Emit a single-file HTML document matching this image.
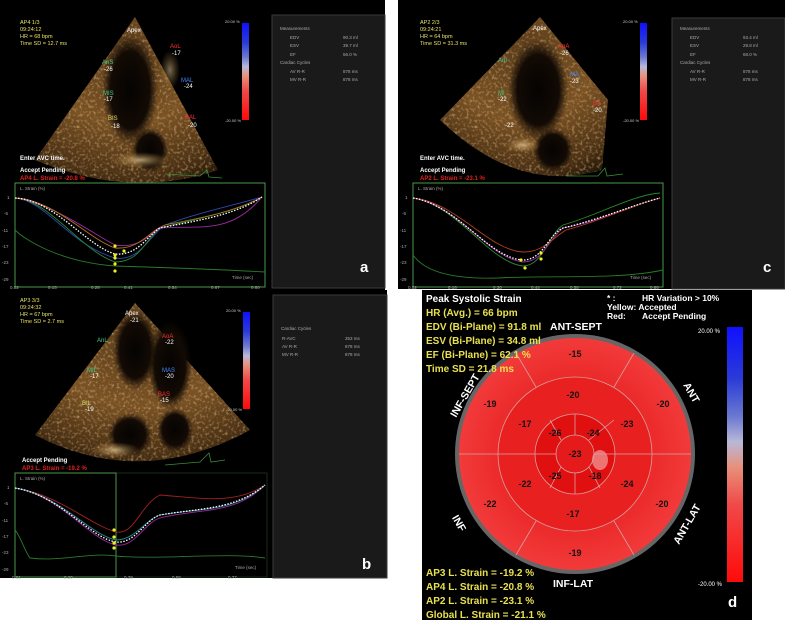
<!DOCTYPE html>
<html><head><meta charset="utf-8"><style>
html,body{margin:0;padding:0;background:#fff;width:785px;height:620px;overflow:hidden}
svg{display:block}
text{font-family:"Liberation Sans",sans-serif}
</style></head><body>
<svg width="785" height="620" viewBox="0 0 785 620" xmlns="http://www.w3.org/2000/svg">
<defs>
<radialGradient id="echo" cx="0.5" cy="0.2" r="0.9">
<stop offset="0" stop-color="#5a3c1a"/><stop offset="0.5" stop-color="#7a5224"/><stop offset="0.85" stop-color="#4a3014"/><stop offset="1" stop-color="#201406"/>
</radialGradient>
<radialGradient id="cav" cx="0.5" cy="0.5" r="0.5">
<stop offset="0" stop-color="#050302"/><stop offset="0.7" stop-color="#120a04"/><stop offset="1" stop-color="#120a04" stop-opacity="0"/>
</radialGradient>
<radialGradient id="bright" cx="0.5" cy="0.5" r="0.5">
<stop offset="0" stop-color="#f0d8a0"/><stop offset="1" stop-color="#c08840" stop-opacity="0"/>
</radialGradient>
<linearGradient id="cbar" x1="0" y1="0" x2="0" y2="1">
<stop offset="0" stop-color="#1010ff"/><stop offset="0.2" stop-color="#2a3ad8"/><stop offset="0.35" stop-color="#6a78d0"/><stop offset="0.45" stop-color="#b8b8d8"/><stop offset="0.55" stop-color="#e8907a"/><stop offset="0.7" stop-color="#f04848"/><stop offset="1" stop-color="#ff0a0a"/>
</linearGradient>
<radialGradient id="bull" cx="0.5" cy="0.5" r="0.5">
<stop offset="0" stop-color="#e01010"/><stop offset="0.5" stop-color="#e82222"/><stop offset="1" stop-color="#f23a3a"/>
</radialGradient>
<filter id="speck" x="0" y="0" width="1" height="1">
<feTurbulence type="fractalNoise" baseFrequency="0.35" numOctaves="2" seed="3"/>
<feColorMatrix type="matrix" values="0 0 0 0 0.95  0 0 0 0 0.7  0 0 0 0 0.35  0 0 0 2.2 -1.1"/>
</filter>
<clipPath id="sa"><path d="M135,17 L35,160 Q130,200 218,170 Z"/></clipPath>
<clipPath id="sc"><path d="M142,17 L42,120 Q120,195 204,170 L210,100 Z"/></clipPath>
<clipPath id="sb"><path d="M135,13 L35,145 Q140,200 250,140 Z"/></clipPath>
</defs>

<!-- PANEL A -->
<g>
<rect x="0" y="0" width="385" height="290" fill="#000"/>
<rect x="272" y="15" width="113" height="273" fill="#1a1a1a" stroke="#3a3a3a"/>
<path d="M135,17 L35,160 Q130,200 218,170 Z" fill="url(#echo)"/>
<rect x="30" y="15" width="195" height="185" filter="url(#speck)" clip-path="url(#sa)" opacity="0.6"/>
<ellipse cx="130" cy="90" rx="28" ry="55" fill="url(#cav)"/>
<ellipse cx="150" cy="150" rx="18" ry="22" fill="url(#cav)"/>
<ellipse cx="140" cy="160" rx="30" ry="8" fill="url(#bright)" opacity="0.7"/>
<ellipse cx="170" cy="70" rx="10" ry="20" fill="url(#bright)" opacity="0.5"/>
<g font-size="5.5" fill="#e8e060"><text x="20" y="24">AP4 1/3</text><text x="20" y="31">09:24:12</text><text x="20" y="38">HR = 68 bpm</text><text x="20" y="45">Time SD = 12.7 ms</text></g>
<g font-size="6" fill="#fff" font-weight="bold"><text x="20" y="160">Enter AVC time.</text><text x="20" y="172">Accept Pending</text></g>
<text x="20" y="180" font-size="6" fill="#e02020" font-weight="bold">AP4 L. Strain = -20.8 %</text>
<g font-size="6" fill="#fff"><text x="127" y="32">Apex</text><text x="170" y="48" fill="#f33">AoL</text><text x="172" y="55">-17</text><text x="102" y="64" fill="#4c8">AnS</text><text x="104" y="71">-26</text><text x="181" y="82" fill="#48f">MAL</text><text x="184" y="88">-24</text><text x="103" y="95" fill="#4c8">MIS</text><text x="104" y="101">-17</text><text x="185" y="119" fill="#f33">BAL</text><text x="188" y="127">-20</text><text x="108" y="120" fill="#dd6">BIS</text><text x="111" y="128">-18</text></g>
<rect x="242" y="23" width="7" height="97" fill="url(#cbar)"/>
<text x="225" y="23" font-size="4" fill="#ccc">20.00 %</text><text x="225" y="122" font-size="4" fill="#ccc">-20.00 %</text>
<path d="M165,174 L200,176 L207,170 L209,177 L222,178" stroke="#3a8a3a" fill="none" stroke-width="0.8"/>
<g font-size="4.5" fill="#aaa"><text x="280" y="30">Measurements</text><text x="280" y="64">Cardiac Cycles</text><text x="290" y="39">EDV</text><text x="343" y="39">90.3 ml</text><text x="290" y="47">ESV</text><text x="343" y="47">39.7 ml</text><text x="290" y="56">EF</text><text x="343" y="56">56.0 %</text><text x="290" y="73">AV R-R</text><text x="343" y="73">878 ms</text><text x="290" y="81">MV R-R</text><text x="343" y="81">878 ms</text></g>
<rect x="15" y="183" width="250" height="104" fill="none" stroke="#4a9a4a" stroke-width="1"/>
<g font-size="4.5" fill="#aaa"><text x="20" y="190">L. Strain (%)</text><text x="7" y="199">1</text><text x="4" y="215">-5</text><text x="2" y="232">-11</text><text x="2" y="248">-17</text><text x="2" y="264">-23</text><text x="2" y="281">-29</text>
<text x="10" y="289">0.02</text><text x="48" y="289">0.15</text><text x="91" y="289">0.28</text><text x="124" y="289">0.41</text><text x="168" y="289">0.54</text><text x="211" y="289">0.67</text><text x="251" y="289">0.80</text><text x="232" y="279">Time (sec)</text></g>
<g fill="none" stroke-width="0.9">
<path d="M15,198 C45,200 70,245 115,258 C140,262 150,235 165,225 C200,212 235,205 262,197" stroke="#2a4ab0"/>
<path d="M15,198 C50,200 80,250 115,262 C140,262 145,240 160,228 C200,218 235,212 262,197" stroke="#2a8a2a"/>
<path d="M15,198 C50,202 95,235 115,245 C135,248 145,240 160,228 C200,225 230,235 262,197" stroke="#9a2aa0"/>
<path d="M15,198 C55,200 90,240 115,248 C140,250 150,230 165,225 C200,218 235,212 262,197" stroke="#b07020"/>
<path d="M15,230 C25,240 60,262 115,266 C180,268 230,270 265,272" stroke="#2a7a2a"/>
<path d="M15,198 C55,200 85,245 115,254 C138,256 148,235 160,228 C200,220 235,215 262,197" stroke="#fff" stroke-dasharray="1.5,1.5" stroke-width="1.3"/>
</g>
<g fill="#ee2"><circle cx="115" cy="246" r="1.6"/><circle cx="115" cy="255" r="1.6"/><circle cx="115" cy="258" r="1.6"/><circle cx="115" cy="264" r="1.6"/><circle cx="115" cy="271" r="1.6"/><circle cx="124" cy="251" r="1.6"/></g>
<text x="360" y="272" font-size="15" font-weight="bold" fill="#fff">a</text>
</g>

<!-- PANEL C -->
<g transform="translate(398,0)">
<rect x="0" y="0" width="387" height="289" fill="#000"/>
<rect x="274" y="18" width="113" height="271" fill="#1a1a1a" stroke="#3a3a3a"/>
<path d="M142,17 L42,120 Q120,195 204,170 L210,100 Z" fill="url(#echo)"/>
<rect x="38" y="15" width="175" height="185" filter="url(#speck)" clip-path="url(#sc)" opacity="0.6"/>
<ellipse cx="140" cy="90" rx="30" ry="50" fill="url(#cav)"/>
<ellipse cx="155" cy="150" rx="20" ry="22" fill="url(#cav)"/>
<ellipse cx="125" cy="145" rx="18" ry="8" fill="url(#bright)" opacity="0.7"/>
<g font-size="5.5" fill="#e8e060"><text x="22" y="24">AP2 2/3</text><text x="22" y="31">09:24:21</text><text x="22" y="38">HR = 64 bpm</text><text x="22" y="45">Time SD = 31.3 ms</text></g>
<g font-size="6" fill="#fff" font-weight="bold"><text x="22" y="160">Enter AVC time.</text><text x="22" y="172">Accept Pending</text></g>
<text x="22" y="180" font-size="6" fill="#e02020" font-weight="bold">AP2 L. Strain = -23.1 %</text>
<g font-size="6" fill="#fff"><text x="135" y="30">Apex</text><text x="160" y="48" fill="#f33">ApA</text><text x="162" y="55">-26</text><text x="100" y="62" fill="#4c8">AnI</text><text x="172" y="76" fill="#48f">MA</text><text x="172" y="83">-23</text><text x="100" y="95" fill="#4c8">MI</text><text x="100" y="101">-22</text><text x="195" y="105" fill="#f33">BA</text><text x="195" y="112">-20</text><text x="107" y="127">-22</text></g>
<rect x="242" y="23" width="7" height="97" fill="url(#cbar)"/>
<text x="225" y="23" font-size="4" fill="#ccc">20.00 %</text><text x="225" y="122" font-size="4" fill="#ccc">-20.00 %</text>
<path d="M168,176 L200,176 L207,168 L209,176 L225,174" stroke="#3a8a3a" fill="none" stroke-width="0.8"/>
<g font-size="4.5" fill="#aaa"><text x="282" y="30">Measurements</text><text x="282" y="64">Cardiac Cycles</text><text x="292" y="39">EDV</text><text x="345" y="39">93.4 ml</text><text x="292" y="47">ESV</text><text x="345" y="47">29.8 ml</text><text x="292" y="56">EF</text><text x="345" y="56">68.0 %</text><text x="292" y="73">AV R-R</text><text x="345" y="73">878 ms</text><text x="292" y="81">MV R-R</text><text x="345" y="81">878 ms</text></g>
<rect x="15" y="183" width="250" height="104" fill="none" stroke="#4a9a4a" stroke-width="1"/>
<g font-size="4.5" fill="#aaa"><text x="20" y="190">L. Strain (%)</text><text x="7" y="199">1</text><text x="4" y="215">-5</text><text x="2" y="232">-11</text><text x="2" y="248">-17</text><text x="2" y="264">-23</text><text x="2" y="281">-29</text>
<text x="10" y="289">0.02</text><text x="50" y="289">0.16</text><text x="95" y="289">0.30</text><text x="133" y="289">0.44</text><text x="172" y="289">0.58</text><text x="215" y="289">0.72</text><text x="252" y="289">0.86</text><text x="232" y="279">Time (sec)</text></g>
<g fill="none" stroke-width="0.9">
<path d="M15,198 C60,205 90,262 125,266 C145,266 150,235 165,225 C200,215 235,195 262,193" stroke="#2a8a2a"/>
<path d="M15,198 C60,205 90,258 125,262 C145,262 150,240 165,228 C200,222 235,205 262,198" stroke="#9a2aa0"/>
<path d="M15,198 C60,203 90,250 125,252 C145,252 152,240 168,230 C200,222 235,205 262,198" stroke="#b04020"/>
<path d="M15,255 C22,265 40,280 100,278 C150,275 220,280 265,270" stroke="#2a7a2a"/>
<path d="M15,198 C60,205 90,258 125,260 C145,260 150,235 165,228 C200,220 235,205 262,198" stroke="#fff" stroke-dasharray="1.5,1.5" stroke-width="1.3"/>
</g>
<g fill="#ee2"><circle cx="123" cy="260" r="1.6"/><circle cx="127" cy="268" r="1.6"/><circle cx="143" cy="253" r="1.6"/><circle cx="143" cy="259" r="1.6"/></g>
<text x="365" y="272" font-size="15" font-weight="bold" fill="#fff">c</text>
</g>

<!-- PANEL B -->
<g transform="translate(0,290)">
<rect x="0" y="0" width="387" height="288" fill="#000"/>
<rect x="273" y="5" width="114" height="283" fill="#1a1a1a" stroke="#3a3a3a"/>
<path d="M135,13 L35,145 Q140,200 250,140 Z" fill="url(#echo)"/>
<rect x="30" y="10" width="225" height="185" filter="url(#speck)" clip-path="url(#sb)" opacity="0.6"/>
<ellipse cx="135" cy="60" rx="22" ry="40" fill="url(#cav)"/>
<ellipse cx="170" cy="75" rx="22" ry="45" fill="url(#cav)"/>
<ellipse cx="130" cy="145" rx="22" ry="22" fill="url(#cav)"/>
<ellipse cx="175" cy="140" rx="18" ry="22" fill="url(#cav)"/>
<ellipse cx="115" cy="160" rx="25" ry="8" fill="url(#bright)" opacity="0.7"/>
<g font-size="5.5" fill="#e8e060"><text x="20" y="12">AP3 3/3</text><text x="20" y="19">09:24:32</text><text x="20" y="26">HR = 67 bpm</text><text x="20" y="33">Time SD = 2.7 ms</text></g>
<g font-size="6" fill="#fff" font-weight="bold"><text x="22" y="172">Accept Pending</text></g>
<text x="22" y="180" font-size="6" fill="#e02020" font-weight="bold">AP3 L. Strain = -19.2 %</text>
<g font-size="6" fill="#fff"><text x="125" y="25">Apex</text><text x="130" y="32">-21</text><text x="162" y="48" fill="#f33">AoA</text><text x="165" y="54">-22</text><text x="97" y="52" fill="#4c8">AnL</text><text x="162" y="82" fill="#48f">MAS</text><text x="165" y="88">-20</text><text x="87" y="82" fill="#4c8">MIL</text><text x="90" y="88">-17</text><text x="158" y="106" fill="#f33">BAS</text><text x="160" y="112">-15</text><text x="82" y="115" fill="#dd6">BIL</text><text x="85" y="121">-19</text></g>
<rect x="243" y="22" width="7" height="97" fill="url(#cbar)"/>
<text x="226" y="22" font-size="4" fill="#ccc">20.00 %</text><text x="226" y="121" font-size="4" fill="#ccc">-20.00 %</text>
<path d="M165,175 L200,172 L209,163 L211,172 L225,170" stroke="#3a8a3a" fill="none" stroke-width="0.8"/>
<g font-size="4.5" fill="#aaa"><text x="281" y="40">Cardiac Cycles</text><text x="282" y="50">R-AVC</text><text x="345" y="50">353 ms</text><text x="282" y="58">AV R-R</text><text x="345" y="58">878 ms</text><text x="282" y="66">MV R-R</text><text x="345" y="66">878 ms</text></g>
<rect x="15" y="183" width="252" height="104" fill="none" stroke="#2a4a2a" stroke-width="0.6"/>
<rect x="15" y="183" width="101" height="104" fill="none" stroke="#4a9a4a" stroke-width="1"/>
<g font-size="4.5" fill="#aaa"><text x="20" y="190">L. Strain (%)</text><text x="7" y="199">1</text><text x="4" y="215">-5</text><text x="2" y="232">-11</text><text x="2" y="248">-17</text><text x="2" y="264">-23</text><text x="2" y="281">-29</text>
<text x="12" y="289">0.01</text><text x="64" y="289">0.20</text><text x="124" y="289">0.39</text><text x="172" y="289">0.58</text><text x="228" y="289">0.77</text><text x="235" y="279">Time (sec)</text></g>
<g fill="none" stroke-width="0.9">
<path d="M15,198 C60,205 90,235 116,242 C135,245 140,215 160,205 C200,208 235,215 265,195" stroke="#a02020"/>
<path d="M15,198 C60,205 90,250 116,255 C135,258 145,232 160,228 C200,218 235,225 265,195" stroke="#9a2aa0"/>
<path d="M15,198 C60,205 90,245 116,250 C135,250 145,230 160,225 C200,218 235,222 265,195" stroke="#2a8a8a"/>
<path d="M15,240 C20,245 25,262 30,268 C60,272 90,262 116,266 C160,270 230,262 265,268" stroke="#2a7a2a"/>
<path d="M15,198 C60,205 90,248 116,252 C135,254 145,230 160,225 C200,218 235,220 265,195" stroke="#fff" stroke-dasharray="1.5,1.5" stroke-width="1.3"/>
</g>
<g fill="#ee2"><circle cx="114" cy="240" r="1.6"/><circle cx="114" cy="247" r="1.6"/><circle cx="114" cy="253" r="1.6"/><circle cx="114" cy="258" r="1.6"/></g>
<text x="362" y="279" font-size="15" font-weight="bold" fill="#fff">b</text>
</g>

<!-- PANEL D -->
<g>
<rect x="422" y="290" width="330" height="330" fill="#000"/>
<circle cx="575" cy="454" r="120" fill="#666"/>
<circle cx="575" cy="454" r="116" fill="url(#bull)"/>
<circle cx="575" cy="454" r="77" fill="#e82020"/>
<circle cx="575" cy="454" r="40" fill="#e01010"/>
<circle cx="575" cy="454" r="19" fill="#e51a1a"/>
<ellipse cx="600" cy="460" rx="8" ry="10" fill="#f4a0a0" opacity="0.7"/>
<g stroke="#d8a0a0" stroke-width="0.8" fill="none">
<circle cx="575" cy="454" r="77"/><circle cx="575" cy="454" r="40"/><circle cx="575" cy="454" r="19"/>
<line x1="459" y1="454" x2="556" y2="454"/><line x1="594" y1="454" x2="691" y2="454"/>
<line x1="575" y1="414" x2="575" y2="435"/><line x1="575" y1="473" x2="575" y2="494"/>
<line x1="536" y1="387" x2="516" y2="353"/><line x1="614" y1="387" x2="634" y2="353"/>
<line x1="536" y1="521" x2="516" y2="555"/><line x1="614" y1="521" x2="634" y2="555"/>
<line x1="561" y1="440" x2="550" y2="420"/><line x1="614" y1="420" x2="589" y2="440"/>
<line x1="561" y1="467" x2="550" y2="488"/><line x1="600" y1="488" x2="589" y2="467"/>
</g>
<g font-size="9" font-weight="bold" fill="#111" text-anchor="middle">
<text x="575" y="357">-15</text><text x="573" y="398">-20</text><text x="490" y="407">-19</text><text x="525" y="427">-17</text><text x="555" y="436">-26</text><text x="593" y="436">-24</text><text x="627" y="427">-23</text><text x="663" y="407">-20</text><text x="575" y="457">-23</text><text x="555" y="479">-25</text><text x="595" y="479">-18</text><text x="525" y="487">-22</text><text x="627" y="487">-24</text><text x="490" y="507">-22</text><text x="662" y="507">-20</text><text x="573" y="517">-17</text><text x="575" y="556">-19</text>
</g>
<g font-size="10.5" font-weight="bold" fill="#fff">
<text x="550" y="330">ANT-SEPT</text><text x="553" y="587">INF-LAT</text>
<text transform="translate(683,385) rotate(60)">ANT</text>
<text transform="translate(679,545) rotate(-60)">ANT-LAT</text>
<text transform="translate(456,525) rotate(60)" text-anchor="middle">INF</text>
<text transform="translate(456,418) rotate(-60)">INF-SEPT</text>
</g>
<text x="426" y="302" font-size="10" font-weight="bold" fill="#fff">Peak Systolic Strain</text>
<g font-size="10" font-weight="bold" fill="#e8e050">
<text x="426" y="316">HR (Avg.) = 66 bpm</text><text x="426" y="330">EDV (Bi-Plane) = 91.8 ml</text><text x="426" y="344">ESV (Bi-Plane) = 34.8 ml</text><text x="426" y="358">EF (Bi-Plane) = 62.1 %</text><text x="426" y="372">Time SD = 21.8 ms</text>
<text x="426" y="576">AP3 L. Strain = -19.2 %</text><text x="426" y="590">AP4 L. Strain = -20.8 %</text><text x="426" y="604">AP2 L. Strain = -23.1 %</text><text x="426" y="618">Global L. Strain = -21.1 %</text>
</g>
<g font-size="8.5" font-weight="bold" fill="#fff">
<text x="607" y="301">* :</text><text x="642" y="301">HR Variation &gt; 10%</text>
<text x="607" y="310">Yellow: Accepted</text><text x="607" y="319">Red:</text><text x="642" y="319">Accept Pending</text>
</g>
<rect x="727" y="327" width="16" height="255" fill="url(#cbar)"/>
<text x="698" y="333" font-size="6" fill="#fff">20.00 %</text>
<text x="698" y="586" font-size="6" fill="#fff">-20.00 %</text>
<text x="728" y="607" font-size="15" font-weight="bold" fill="#fff">d</text>
</g>
</svg>
</body></html>
